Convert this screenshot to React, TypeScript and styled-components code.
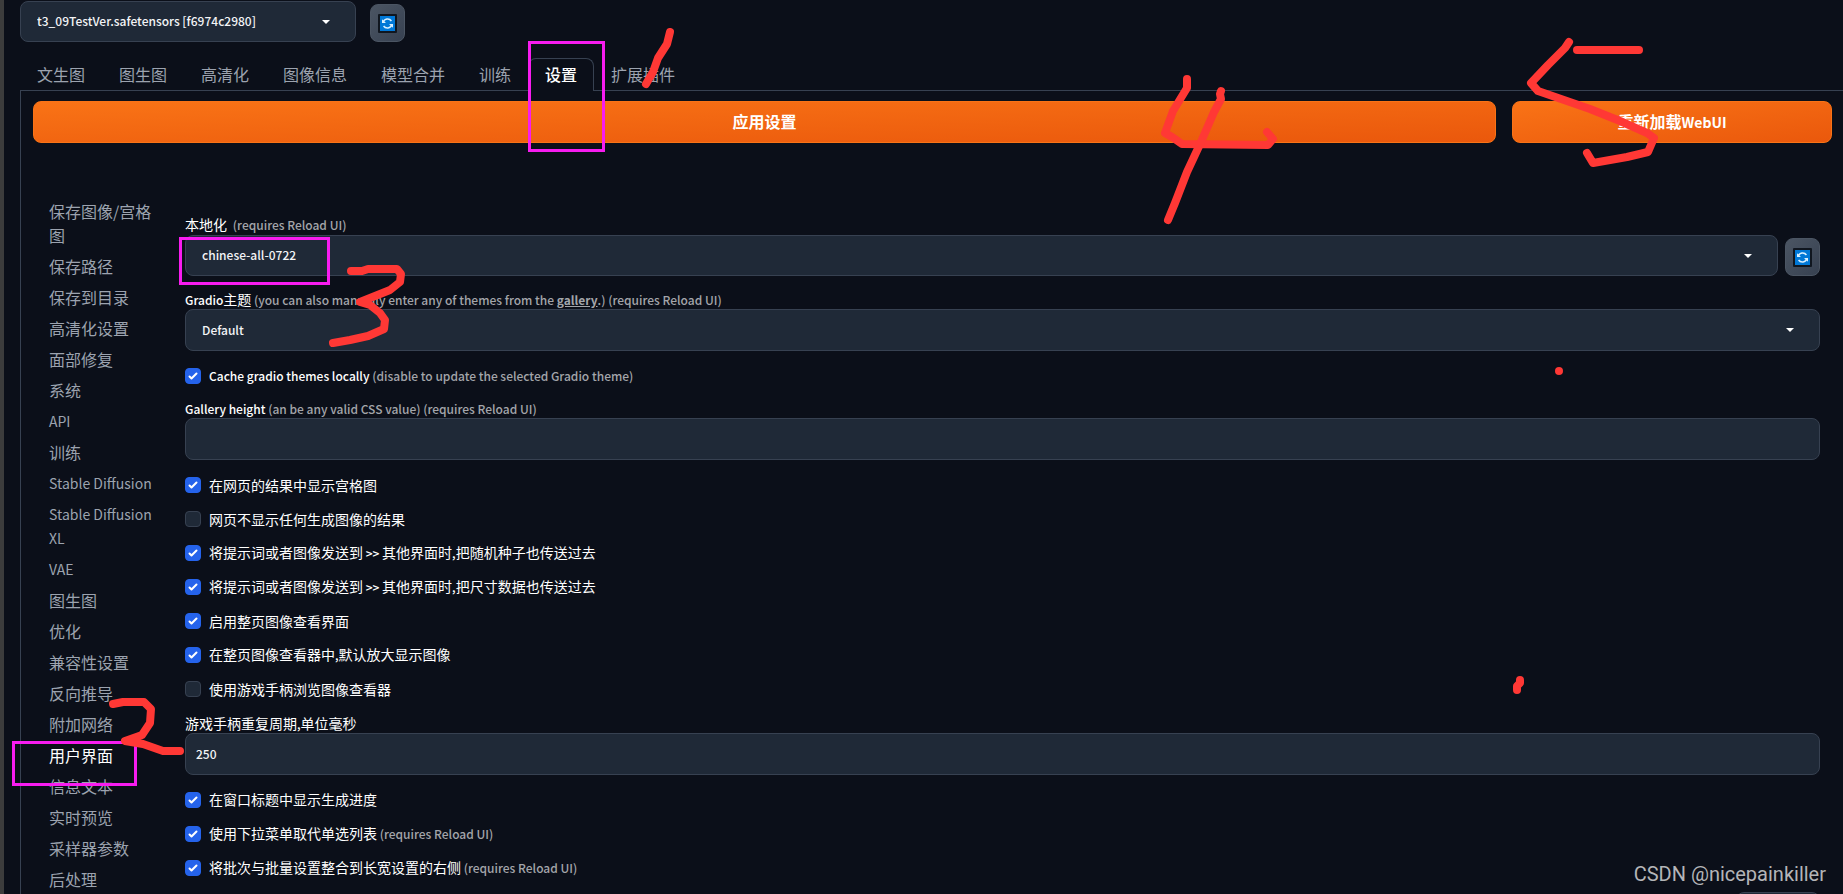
import React from "react";
import styled, { createGlobalStyle, css } from "styled-components";

const GlobalStyle = createGlobalStyle`
  *, *::before, *::after { box-sizing: border-box; }
  body {
    margin: 0;
    overflow: hidden;
    background: #0b0f19;
    color: #ffffff;
    font-family: "Noto Sans CJK SC", "Noto Sans", sans-serif;
    font-size: 14px;
  }
  button, input, select { font: inherit; color: inherit; margin: 0; }
`;

const Page = styled.div`
  position: relative;
  height: 100vh;
  overflow: hidden;
  border-left: 4px solid #3c3c3c;
  padding: 1px 0 0 16px;
`;

const QuickSettings = styled.header`
  display: flex;
  align-items: flex-end;
  gap: 14px;
`;

const SelectBox = styled.div<{ $width?: string }>`
  position: relative;
  flex: ${(p) => (p.$width ? "none" : "1")};
  width: ${(p) => p.$width ?? "auto"};
`;

const latinText = css`
  font-size: 12px;
  font-weight: 500;
`;

const field = css`
  ${latinText}
  display: block;
  width: 100%;
  border: 1px solid #374151;
  border-radius: 8px;
  background: #1f2937;
  color: #f3f4f6;
  outline: none;
`;

const Select = styled.select<{ $height: number }>`
  ${field}
  appearance: none;
  height: ${(p) => p.$height}px;
  padding: 0 48px 2px 16px;
`;

const TextInput = styled.input`
  ${field}
  height: 42px;
  padding: 0 10px 2px;
`;

const CaretSvg = styled.svg`
  position: absolute;
  right: 26px;
  top: 19px;
  width: 8px;
  height: 4px;
  pointer-events: none;
`;

const Caret = () => (
  <CaretSvg viewBox="0 0 8 4" aria-hidden="true">
    <path d="M0 0h8L4 4z" fill="#fff" />
  </CaretSvg>
);

const ToolButton = styled.button`
  display: flex;
  flex: none;
  align-items: center;
  justify-content: center;
  width: 35px;
  height: 38px;
  padding: 0;
  border: 1px solid #4b5563;
  border-radius: 8px;
  background: linear-gradient(to bottom right, #4b5563, #374151);
`;

const RefreshIcon = () => (
  <svg width="19" height="19" viewBox="0 0 19 19" aria-hidden="true">
    <rect width="19" height="19" rx="1" fill="#10161f" />
    <rect x="2" y="2" width="15" height="15" fill="#0078d7" />
    <g fill="none" stroke="#d9f0ff" strokeWidth="1.5">
      <path d="M5.2 8.2A4.6 4.6 0 0 1 13.4 7" />
      <path d="M13.8 10.8A4.6 4.6 0 0 1 5.6 12" />
    </g>
    <path d="M4 5.2V9h4zM15 13.8V10h-4z" fill="#d9f0ff" />
  </svg>
);

const TabBar = styled.nav`
  display: flex;
  margin-top: 16px;
  border-bottom: 1px solid #374151;
`;

const Tab = styled.button<{ $active?: boolean }>`
  height: 33px;
  margin-bottom: -1px;
  padding: 0 16px 3px;
  border: 1px solid ${(p) => (p.$active ? "#374151" : "transparent")};
  border-bottom: 0;
  border-radius: 8px 8px 0 0;
  background: ${(p) => (p.$active ? "#0b0f19" : "transparent")};
  color: ${(p) => (p.$active ? "#ffffff" : "#9ca3af")};
  font-size: 16px;
  font-weight: ${(p) => (p.$active ? 500 : 400)};
  line-height: 24px;
`;

const Panel = styled.main`
  padding: 10px 11px 0 12px;
  border-left: 1px solid #374151;
`;

const Actions = styled.div`
  display: grid;
  grid-template-columns: 1463fr 320fr;
  gap: 16px;
`;

const PrimaryButton = styled.button`
  height: 42px;
  padding: 0 0 2px;
  border: 1px solid #f97316;
  border-radius: 8px;
  background: linear-gradient(to bottom right, #f97316, #ea580c);
  color: #ffffff;
  font-size: 16px;
  font-weight: 700;
  line-height: 24px;
`;

const Small = styled.span<{ $size: number }>`
  font-size: ${(p) => p.$size}px;
`;

const Body = styled.div`
  display: flex;
  gap: 24px;
  margin-top: 56px;
  padding: 0 12px 0 16px;
`;

const SideNav = styled.nav`
  display: flex;
  flex: none;
  flex-direction: column;
  gap: 7px;
  width: 112px;
`;

const SideItem = styled.button<{ $active?: boolean; $latin?: boolean }>`
  padding: 0;
  border: 0;
  background: none;
  color: ${(p) => (p.$active ? "#ffffff" : "#9ca3af")};
  font-size: ${(p) => (p.$latin ? 14 : 16)}px;
  line-height: 24px;
  text-align: left;
`;

const Settings = styled.form`
  display: flex;
  flex: 1;
  flex-direction: column;
  gap: 15px;
  padding-top: 17px;
`;

const FieldLabel = styled.label<{ $height: number; $line?: number }>`
  display: block;
  height: ${(p) => p.$height}px;
  line-height: ${(p) => p.$line ?? 16}px;
  white-space: pre;
`;

const Latin = styled.span`
  ${latinText}
`;

const Hint = styled.span`
  ${latinText}
  color: #a3a5aa;
  a { color: inherit; font-weight: 700; }
`;

const FieldRow = styled.div`
  display: flex;
  align-items: flex-end;
  gap: 7px;
`;

const CheckRow = styled.label`
  display: flex;
  align-items: center;
  height: 19px;
  gap: 8px;
  white-space: pre;
  line-height: 18px;
`;

const CheckBox = styled.input`
  appearance: none;
  flex: none;
  width: 16px;
  height: 16px;
  border: 1px solid #374151;
  border-radius: 4px;
  background: #1f2937;
  &:checked {
    border-color: #2563eb;
    background: #2563eb
      url("data:image/svg+xml,%3Csvg viewBox='0 0 16 16' fill='white' xmlns='http://www.w3.org/2000/svg'%3E%3Cpath d='M12.207 4.793a1 1 0 010 1.414l-5 5a1 1 0 01-1.414 0l-2-2a1 1 0 011.414-1.414L6.5 9.086l4.293-4.293a1 1 0 011.414 0z'/%3E%3C/svg%3E")
      center / 16px no-repeat;
  }
`;

const SliderRow = styled.div`
  display: flex;
  justify-content: flex-end;
`;

const SliderNumber = styled.input`
  ${field}
  width: 84px;
  height: 28px;
`;

const Marks = styled.svg`
  position: absolute;
  top: 0;
  left: -4px;
  pointer-events: none;
`;

const Watermark = styled.div`
  position: absolute;
  right: 17px;
  bottom: 7px;
  color: #b4b5b8;
  font-family: Roboto, sans-serif;
  font-size: 20px;
  line-height: 26px;
`;

const tabs = ["文生图", "图生图", "高清化", "图像信息", "模型合并", "训练", "设置", "扩展插件"];

const sections = [
  "保存图像/宫格图", "保存路径", "保存到目录", "高清化设置", "面部修复", "系统", "API", "训练",
  "Stable Diffusion", "Stable Diffusion XL", "VAE", "图生图", "优化", "兼容性设置", "反向推导",
  "附加网络", "用户界面", "信息文本", "实时预览", "采样器参数", "后处理",
];

const viewerOptions: [string, boolean][] = [
  ["在网页的结果中显示宫格图", true],
  ["网页不显示任何生成图像的结果", false],
  ["将提示词或者图像发送到 >> 其他界面时,把随机种子也传送过去", true],
  ["将提示词或者图像发送到 >> 其他界面时,把尺寸数据也传送过去", true],
  ["启用整页图像查看界面", true],
  ["在整页图像查看器中,默认放大显示图像", true],
  ["使用游戏手柄浏览图像查看器", false],
];

const layoutOptions: [string, string][] = [
  ["在窗口标题中显示生成进度", ""],
  ["使用下拉菜单取代单选列表", " (requires Reload UI)"],
  ["将批次与批量设置整合到长宽设置的右侧", " (requires Reload UI)"],
];

/* Sets Latin runs a step smaller than the surrounding Chinese text. */
const Mixed = ({ text }: { text: string }) => (
  <span>
    {text.split(/([\x20-\x7e]+)/).map((part, i) =>
      i % 2 ? <Latin key={i}>{part}</Latin> : part
    )}
  </span>
);

const strokes = [
  "M670 32L667 44L658 58L653 72L646 84",
  "M1187 79L1187 88L1173 111L1165 133L1172 137L1182 144L1268 145L1273 139L1267 132",
  "M1221 91L1220 94L1221 99L1214 112L1201 142L1187 172L1175 203L1168 220",
  "M1569 42L1565 48L1548 65L1531 83L1538 91L1590 109L1620 121L1647 133L1654 138L1648 152L1627 157L1593 163L1587 153",
  "M1577 50L1639 50",
  "M351 271L362 271L368 269L397 269L401 274L400 282L390 290L360 302L370 305L380 313L385 320L384 329L368 336L350 340L333 343",
  "M113 704L123 702L144 702L151 709L150 723L142 735L125 741L143 744L163 751L180 751",
  "M1559 371L1559 371",
  "M1520 680L1520 683L1517 686L1517 690",
];

export default function App() {
  return (
    <>
      <GlobalStyle />
      <Page>
        <QuickSettings>
          <SelectBox $width="336px">
            <Select $height={41} aria-label="Checkpoint">
              <option>t3_09TestVer.safetensors [f6974c2980]</option>
            </Select>
            <Caret />
          </SelectBox>
          <ToolButton type="button" aria-label="Refresh checkpoints"><RefreshIcon /></ToolButton>
        </QuickSettings>

        <TabBar>
          {tabs.map((t) => (
            <Tab key={t} type="button" $active={t === "设置"}>{t}</Tab>
          ))}
        </TabBar>

        <Panel>
          <Actions>
            <PrimaryButton type="button">应用设置</PrimaryButton>
            <PrimaryButton type="button">重新加载<Small $size={14}>WebUI</Small></PrimaryButton>
          </Actions>

          <Body>
            <SideNav>
              {sections.map((s) => (
                <SideItem key={s} type="button" $active={s === "用户界面"} $latin={/^[A-Z]/.test(s)}>{s}</SideItem>
              ))}
            </SideNav>

            <Settings>
              <div>
                <FieldLabel $height={19} htmlFor="localization">
                  本地化 <Hint> (requires Reload UI)</Hint>
                </FieldLabel>
                <FieldRow>
                  <SelectBox>
                    <Select $height={41} id="localization">
                      <option>chinese-all-0722</option>
                    </Select>
                    <Caret />
                  </SelectBox>
                  <ToolButton type="button" aria-label="Refresh localizations"><RefreshIcon /></ToolButton>
                </FieldRow>
              </div>

              <div>
                <FieldLabel $height={18} htmlFor="theme">
                  <Latin>Gradio</Latin>主题
                  <Hint> (you can also manually enter any of themes from the <a href="#gallery">gallery</a>.) (requires Reload UI)</Hint>
                </FieldLabel>
                <SelectBox>
                  <Select $height={42} id="theme">
                    <option>Default</option>
                  </Select>
                  <Caret />
                </SelectBox>
              </div>

              <CheckRow>
                <CheckBox type="checkbox" defaultChecked />
                <span><Latin>Cache gradio themes locally</Latin><Hint> (disable to update the selected Gradio theme)</Hint></span>
              </CheckRow>

              <div>
                <FieldLabel $height={18} htmlFor="gallery-height">
                  <Latin>Gallery height</Latin><Hint> (an be any valid CSS value) (requires Reload UI)</Hint>
                </FieldLabel>
                <TextInput id="gallery-height" type="text" />
              </div>

              {viewerOptions.map(([text, on]) => (
                <CheckRow key={text}>
                  <CheckBox type="checkbox" defaultChecked={on} />
                  <Mixed text={text} />
                </CheckRow>
              ))}

              <div>
                <FieldLabel $height={20} $line={20} htmlFor="repeat-period"><Mixed text="游戏手柄重复周期,单位毫秒" /></FieldLabel>
                <TextInput id="repeat-period" type="text" defaultValue="250" />
              </div>

              {layoutOptions.map(([text, hint]) => (
                <CheckRow key={text}>
                  <CheckBox type="checkbox" defaultChecked />
                  <span>{text}<Hint>{hint}</Hint></span>
                </CheckRow>
              ))}

              <SliderRow><SliderNumber type="text" aria-label="Precision" /></SliderRow>
            </Settings>
          </Body>
        </Panel>

        <Marks width="1843" height="894" viewBox="0 0 1843 894" aria-hidden="true">
          <g fill="none" stroke="#f81cf0" strokeWidth="3">
            <rect x="529.5" y="42.5" width="74" height="108" />
            <rect x="180.5" y="238.5" width="148" height="45" />
            <rect x="13.5" y="742.5" width="122" height="42" />
          </g>
          <g fill="none" stroke="#ff3835" strokeWidth="8" strokeLinecap="round" strokeLinejoin="round">
            {strokes.map((d) => <path key={d} d={d} />)}
          </g>
        </Marks>
        <Watermark>CSDN @nicepainkiller</Watermark>
      </Page>
    </>
  );
}
